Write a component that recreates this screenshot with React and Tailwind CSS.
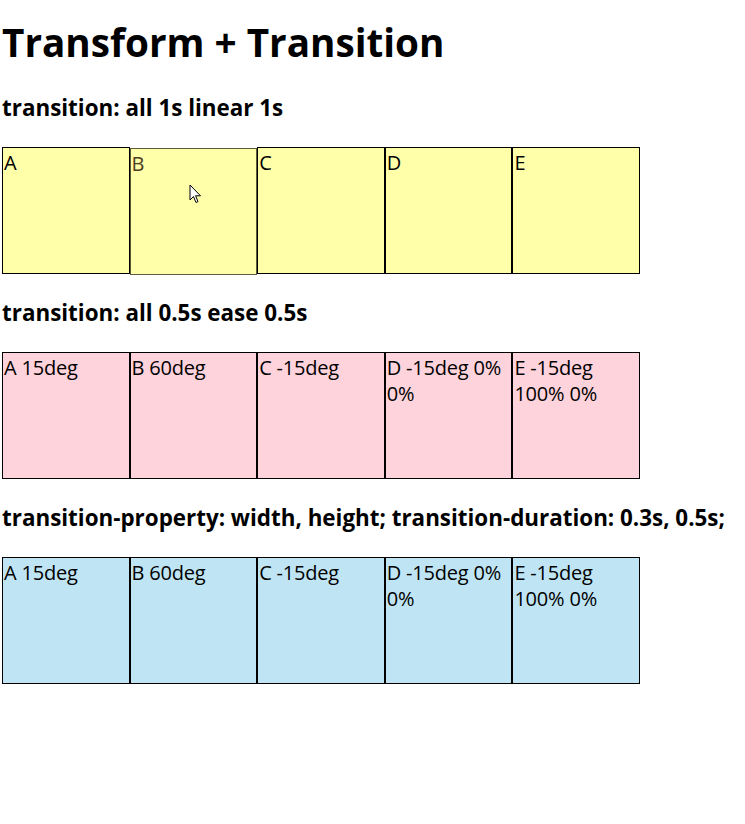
import React from 'react';

const font = { fontFamily: '"Open Sans", "Noto Sans CJK KR", sans-serif' };

const rows = [
  {
    title: 'transition: all 1s linear 1s',
    bg: 'bg-[#ffffaa]',
    labels: [['A'], ['B'], ['C'], ['D'], ['E']],
  },
  {
    title: 'transition: all 0.5s ease 0.5s',
    bg: 'bg-[#fed3db]',
    labels: [['A 15deg'], ['B 60deg'], ['C -15deg'], ['D -15deg 0%', '0%'], ['E -15deg', '100% 0%']],
  },
  {
    title: 'transition-property: width, height; transition-duration: 0.3s, 0.5s;',
    bg: 'bg-[#bfe5f4]',
    labels: [['A 15deg'], ['B 60deg'], ['C -15deg'], ['D -15deg 0%', '0%'], ['E -15deg', '100% 0%']],
  },
];

function Cursor() {
  return (
    <svg className="absolute left-[58px] top-[35px]" width="13" height="20" viewBox="0 0 13 20">
      <path d="M1 1 L1 16 L4.5 12.5 L7 18.5 L9 17.6 L6.6 11.8 L11.5 11.8 Z" fill="#fff" stroke="#000" strokeWidth="1" strokeLinejoin="round" />
    </svg>
  );
}

function Box({ lines, bg, hover }) {
  return (
    <div
      className={`relative w-[127.6px] h-[127px] shrink-0 ${bg} border ${hover ? 'border-[#5c5c3a] text-[#4d3d22] translate-y-[1px]' : 'border-black'} text-[20px] leading-[26px] px-[1px] pt-[2px] tracking-[-0.2px]`}
    >
      {lines.map((l, i) => (
        <div key={i} className="whitespace-nowrap">{l}</div>
      ))}
      {hover && <Cursor />}
    </div>
  );
}

export default function App() {
  return (
    <div className="bg-white min-h-[824px] px-[2px] pt-[18px] text-black" style={font}>
      <h1 className="text-[38.7px] font-bold leading-[48px]">Transform + Transition</h1>
      {rows.map((row, r) => (
        <section key={r} className={r === 0 ? 'mt-[27px]' : 'mt-[24px]'}>
          <h2 className="text-[22.4px] font-bold leading-[30px]">{row.title}</h2>
          <div className="flex mt-[24px]">
            {row.labels.map((lines, i) => (
              <Box key={i} lines={lines} bg={row.bg} hover={r === 0 && i === 1} />
            ))}
          </div>
        </section>
      ))}
    </div>
  );
}
